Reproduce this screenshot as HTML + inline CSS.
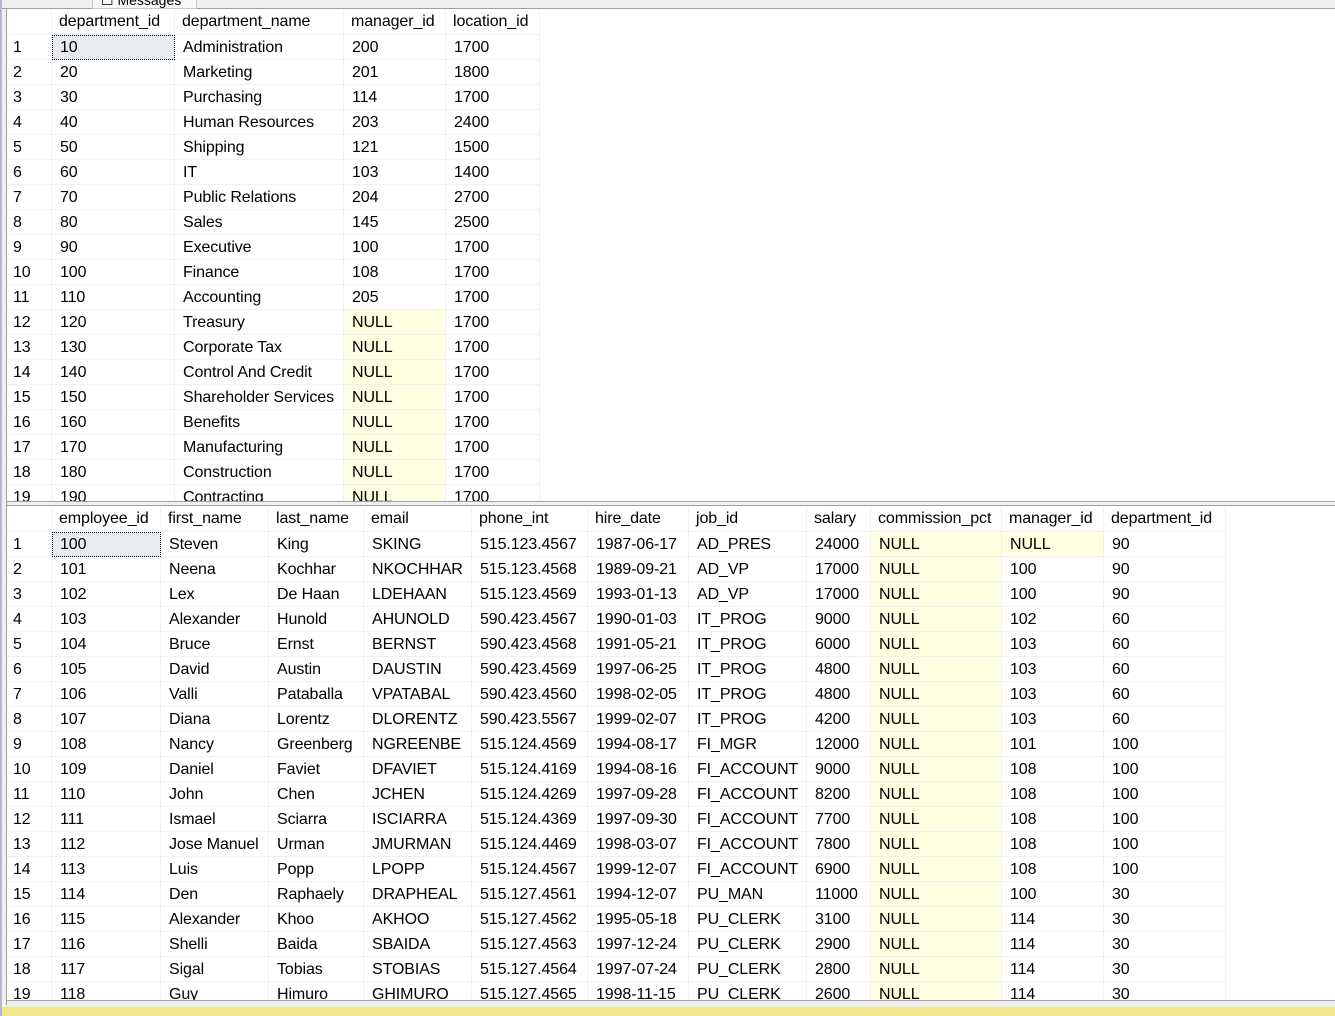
<!DOCTYPE html>
<html><head><meta charset="utf-8"><style>
*{margin:0;padding:0;box-sizing:border-box}
body{width:1335px;height:1016px;overflow:hidden;background:#fff;font-family:"Liberation Sans",Arial,sans-serif;font-size:16px;color:#000;position:relative}
.top{position:absolute;left:0;top:0;width:1335px;height:9px;background:#f0f0f0;border-bottom:1px solid #a0a0a0}
.tab{position:absolute;left:92px;top:-6px;width:105px;height:15px;background:#f7f7f7;border:1px solid #c8c8c8;font-size:14px;padding-left:8px;line-height:10px}
.lstrip{position:absolute;left:0;top:0;width:2px;height:1016px;background:#b4b9d0}
.lstrip2{position:absolute;left:2px;top:9px;width:5px;height:996px;background:#f0f0f0;border-right:1px solid #a0a0a0}
.grid{position:absolute;left:7px;overflow:hidden}
.r{display:flex;height:25px;white-space:nowrap}
.c{height:25px;border-right:1px solid #f0f0f0;border-bottom:1px solid #f0f0f0;padding-left:8px;line-height:26px;overflow:hidden;flex:none;letter-spacing:-0.1px}
.h .c{padding-left:7px;line-height:24px;border-bottom:1px solid #f0f0f0}
.n{width:45px;padding-left:6px;border-right:1px solid #f0f0f0}
.y{background:#ffffe1}
.s{background:#e8ecf0;outline:1px dotted #000;outline-offset:-1px}
.sep{position:absolute;left:7px;top:501px;width:1328px;height:5px;background:#f0f0f0;border-top:1px solid #a0a0a0;border-bottom:1px solid #a0a0a0}
.bot{position:absolute;left:0;top:1000px;width:1335px;height:7px;background:#f0f0f0;border-top:1px solid #a0a0a0}
.yel{position:absolute;left:0;top:1007px;width:1335px;height:9px;background:#f0e68c}
</style></head><body>
<div class="top"><div class="tab">☐ Messages</div></div>
<div class="grid" style="top:10px;height:491px;width:1328px">
<div class="r h"><div class="c n"></div><div class="c" style="width:123px">department_id</div><div class="c" style="width:169px">department_name</div><div class="c" style="width:102px">manager_id</div><div class="c" style="width:94px">location_id</div></div>
<div class="r"><div class="c n">1</div><div class="c s" style="width:123px">10</div><div class="c" style="width:169px">Administration</div><div class="c" style="width:102px">200</div><div class="c" style="width:94px">1700</div></div>
<div class="r"><div class="c n">2</div><div class="c" style="width:123px">20</div><div class="c" style="width:169px">Marketing</div><div class="c" style="width:102px">201</div><div class="c" style="width:94px">1800</div></div>
<div class="r"><div class="c n">3</div><div class="c" style="width:123px">30</div><div class="c" style="width:169px">Purchasing</div><div class="c" style="width:102px">114</div><div class="c" style="width:94px">1700</div></div>
<div class="r"><div class="c n">4</div><div class="c" style="width:123px">40</div><div class="c" style="width:169px">Human Resources</div><div class="c" style="width:102px">203</div><div class="c" style="width:94px">2400</div></div>
<div class="r"><div class="c n">5</div><div class="c" style="width:123px">50</div><div class="c" style="width:169px">Shipping</div><div class="c" style="width:102px">121</div><div class="c" style="width:94px">1500</div></div>
<div class="r"><div class="c n">6</div><div class="c" style="width:123px">60</div><div class="c" style="width:169px">IT</div><div class="c" style="width:102px">103</div><div class="c" style="width:94px">1400</div></div>
<div class="r"><div class="c n">7</div><div class="c" style="width:123px">70</div><div class="c" style="width:169px">Public Relations</div><div class="c" style="width:102px">204</div><div class="c" style="width:94px">2700</div></div>
<div class="r"><div class="c n">8</div><div class="c" style="width:123px">80</div><div class="c" style="width:169px">Sales</div><div class="c" style="width:102px">145</div><div class="c" style="width:94px">2500</div></div>
<div class="r"><div class="c n">9</div><div class="c" style="width:123px">90</div><div class="c" style="width:169px">Executive</div><div class="c" style="width:102px">100</div><div class="c" style="width:94px">1700</div></div>
<div class="r"><div class="c n">10</div><div class="c" style="width:123px">100</div><div class="c" style="width:169px">Finance</div><div class="c" style="width:102px">108</div><div class="c" style="width:94px">1700</div></div>
<div class="r"><div class="c n">11</div><div class="c" style="width:123px">110</div><div class="c" style="width:169px">Accounting</div><div class="c" style="width:102px">205</div><div class="c" style="width:94px">1700</div></div>
<div class="r"><div class="c n">12</div><div class="c" style="width:123px">120</div><div class="c" style="width:169px">Treasury</div><div class="c y" style="width:102px">NULL</div><div class="c" style="width:94px">1700</div></div>
<div class="r"><div class="c n">13</div><div class="c" style="width:123px">130</div><div class="c" style="width:169px">Corporate Tax</div><div class="c y" style="width:102px">NULL</div><div class="c" style="width:94px">1700</div></div>
<div class="r"><div class="c n">14</div><div class="c" style="width:123px">140</div><div class="c" style="width:169px">Control And Credit</div><div class="c y" style="width:102px">NULL</div><div class="c" style="width:94px">1700</div></div>
<div class="r"><div class="c n">15</div><div class="c" style="width:123px">150</div><div class="c" style="width:169px">Shareholder Services</div><div class="c y" style="width:102px">NULL</div><div class="c" style="width:94px">1700</div></div>
<div class="r"><div class="c n">16</div><div class="c" style="width:123px">160</div><div class="c" style="width:169px">Benefits</div><div class="c y" style="width:102px">NULL</div><div class="c" style="width:94px">1700</div></div>
<div class="r"><div class="c n">17</div><div class="c" style="width:123px">170</div><div class="c" style="width:169px">Manufacturing</div><div class="c y" style="width:102px">NULL</div><div class="c" style="width:94px">1700</div></div>
<div class="r"><div class="c n">18</div><div class="c" style="width:123px">180</div><div class="c" style="width:169px">Construction</div><div class="c y" style="width:102px">NULL</div><div class="c" style="width:94px">1700</div></div>
<div class="r"><div class="c n">19</div><div class="c" style="width:123px">190</div><div class="c" style="width:169px">Contracting</div><div class="c y" style="width:102px">NULL</div><div class="c" style="width:94px">1700</div></div>
</div>
<div class="sep"></div>
<div class="grid" style="top:507px;height:493px;width:1328px">
<div class="r h"><div class="c n"></div><div class="c" style="width:109px">employee_id</div><div class="c" style="width:108px">first_name</div><div class="c" style="width:95px">last_name</div><div class="c" style="width:108px">email</div><div class="c" style="width:116px">phone_int</div><div class="c" style="width:101px">hire_date</div><div class="c" style="width:118px">job_id</div><div class="c" style="width:64px">salary</div><div class="c" style="width:131px">commission_pct</div><div class="c" style="width:102px">manager_id</div><div class="c" style="width:122px">department_id</div></div>
<div class="r"><div class="c n">1</div><div class="c s" style="width:109px">100</div><div class="c" style="width:108px">Steven</div><div class="c" style="width:95px">King</div><div class="c" style="width:108px">SKING</div><div class="c" style="width:116px">515.123.4567</div><div class="c" style="width:101px">1987-06-17</div><div class="c" style="width:118px">AD_PRES</div><div class="c" style="width:64px">24000</div><div class="c y" style="width:131px">NULL</div><div class="c y" style="width:102px">NULL</div><div class="c" style="width:122px">90</div></div>
<div class="r"><div class="c n">2</div><div class="c" style="width:109px">101</div><div class="c" style="width:108px">Neena</div><div class="c" style="width:95px">Kochhar</div><div class="c" style="width:108px">NKOCHHAR</div><div class="c" style="width:116px">515.123.4568</div><div class="c" style="width:101px">1989-09-21</div><div class="c" style="width:118px">AD_VP</div><div class="c" style="width:64px">17000</div><div class="c y" style="width:131px">NULL</div><div class="c" style="width:102px">100</div><div class="c" style="width:122px">90</div></div>
<div class="r"><div class="c n">3</div><div class="c" style="width:109px">102</div><div class="c" style="width:108px">Lex</div><div class="c" style="width:95px">De Haan</div><div class="c" style="width:108px">LDEHAAN</div><div class="c" style="width:116px">515.123.4569</div><div class="c" style="width:101px">1993-01-13</div><div class="c" style="width:118px">AD_VP</div><div class="c" style="width:64px">17000</div><div class="c y" style="width:131px">NULL</div><div class="c" style="width:102px">100</div><div class="c" style="width:122px">90</div></div>
<div class="r"><div class="c n">4</div><div class="c" style="width:109px">103</div><div class="c" style="width:108px">Alexander</div><div class="c" style="width:95px">Hunold</div><div class="c" style="width:108px">AHUNOLD</div><div class="c" style="width:116px">590.423.4567</div><div class="c" style="width:101px">1990-01-03</div><div class="c" style="width:118px">IT_PROG</div><div class="c" style="width:64px">9000</div><div class="c y" style="width:131px">NULL</div><div class="c" style="width:102px">102</div><div class="c" style="width:122px">60</div></div>
<div class="r"><div class="c n">5</div><div class="c" style="width:109px">104</div><div class="c" style="width:108px">Bruce</div><div class="c" style="width:95px">Ernst</div><div class="c" style="width:108px">BERNST</div><div class="c" style="width:116px">590.423.4568</div><div class="c" style="width:101px">1991-05-21</div><div class="c" style="width:118px">IT_PROG</div><div class="c" style="width:64px">6000</div><div class="c y" style="width:131px">NULL</div><div class="c" style="width:102px">103</div><div class="c" style="width:122px">60</div></div>
<div class="r"><div class="c n">6</div><div class="c" style="width:109px">105</div><div class="c" style="width:108px">David</div><div class="c" style="width:95px">Austin</div><div class="c" style="width:108px">DAUSTIN</div><div class="c" style="width:116px">590.423.4569</div><div class="c" style="width:101px">1997-06-25</div><div class="c" style="width:118px">IT_PROG</div><div class="c" style="width:64px">4800</div><div class="c y" style="width:131px">NULL</div><div class="c" style="width:102px">103</div><div class="c" style="width:122px">60</div></div>
<div class="r"><div class="c n">7</div><div class="c" style="width:109px">106</div><div class="c" style="width:108px">Valli</div><div class="c" style="width:95px">Pataballa</div><div class="c" style="width:108px">VPATABAL</div><div class="c" style="width:116px">590.423.4560</div><div class="c" style="width:101px">1998-02-05</div><div class="c" style="width:118px">IT_PROG</div><div class="c" style="width:64px">4800</div><div class="c y" style="width:131px">NULL</div><div class="c" style="width:102px">103</div><div class="c" style="width:122px">60</div></div>
<div class="r"><div class="c n">8</div><div class="c" style="width:109px">107</div><div class="c" style="width:108px">Diana</div><div class="c" style="width:95px">Lorentz</div><div class="c" style="width:108px">DLORENTZ</div><div class="c" style="width:116px">590.423.5567</div><div class="c" style="width:101px">1999-02-07</div><div class="c" style="width:118px">IT_PROG</div><div class="c" style="width:64px">4200</div><div class="c y" style="width:131px">NULL</div><div class="c" style="width:102px">103</div><div class="c" style="width:122px">60</div></div>
<div class="r"><div class="c n">9</div><div class="c" style="width:109px">108</div><div class="c" style="width:108px">Nancy</div><div class="c" style="width:95px">Greenberg</div><div class="c" style="width:108px">NGREENBE</div><div class="c" style="width:116px">515.124.4569</div><div class="c" style="width:101px">1994-08-17</div><div class="c" style="width:118px">FI_MGR</div><div class="c" style="width:64px">12000</div><div class="c y" style="width:131px">NULL</div><div class="c" style="width:102px">101</div><div class="c" style="width:122px">100</div></div>
<div class="r"><div class="c n">10</div><div class="c" style="width:109px">109</div><div class="c" style="width:108px">Daniel</div><div class="c" style="width:95px">Faviet</div><div class="c" style="width:108px">DFAVIET</div><div class="c" style="width:116px">515.124.4169</div><div class="c" style="width:101px">1994-08-16</div><div class="c" style="width:118px">FI_ACCOUNT</div><div class="c" style="width:64px">9000</div><div class="c y" style="width:131px">NULL</div><div class="c" style="width:102px">108</div><div class="c" style="width:122px">100</div></div>
<div class="r"><div class="c n">11</div><div class="c" style="width:109px">110</div><div class="c" style="width:108px">John</div><div class="c" style="width:95px">Chen</div><div class="c" style="width:108px">JCHEN</div><div class="c" style="width:116px">515.124.4269</div><div class="c" style="width:101px">1997-09-28</div><div class="c" style="width:118px">FI_ACCOUNT</div><div class="c" style="width:64px">8200</div><div class="c y" style="width:131px">NULL</div><div class="c" style="width:102px">108</div><div class="c" style="width:122px">100</div></div>
<div class="r"><div class="c n">12</div><div class="c" style="width:109px">111</div><div class="c" style="width:108px">Ismael</div><div class="c" style="width:95px">Sciarra</div><div class="c" style="width:108px">ISCIARRA</div><div class="c" style="width:116px">515.124.4369</div><div class="c" style="width:101px">1997-09-30</div><div class="c" style="width:118px">FI_ACCOUNT</div><div class="c" style="width:64px">7700</div><div class="c y" style="width:131px">NULL</div><div class="c" style="width:102px">108</div><div class="c" style="width:122px">100</div></div>
<div class="r"><div class="c n">13</div><div class="c" style="width:109px">112</div><div class="c" style="width:108px">Jose Manuel</div><div class="c" style="width:95px">Urman</div><div class="c" style="width:108px">JMURMAN</div><div class="c" style="width:116px">515.124.4469</div><div class="c" style="width:101px">1998-03-07</div><div class="c" style="width:118px">FI_ACCOUNT</div><div class="c" style="width:64px">7800</div><div class="c y" style="width:131px">NULL</div><div class="c" style="width:102px">108</div><div class="c" style="width:122px">100</div></div>
<div class="r"><div class="c n">14</div><div class="c" style="width:109px">113</div><div class="c" style="width:108px">Luis</div><div class="c" style="width:95px">Popp</div><div class="c" style="width:108px">LPOPP</div><div class="c" style="width:116px">515.124.4567</div><div class="c" style="width:101px">1999-12-07</div><div class="c" style="width:118px">FI_ACCOUNT</div><div class="c" style="width:64px">6900</div><div class="c y" style="width:131px">NULL</div><div class="c" style="width:102px">108</div><div class="c" style="width:122px">100</div></div>
<div class="r"><div class="c n">15</div><div class="c" style="width:109px">114</div><div class="c" style="width:108px">Den</div><div class="c" style="width:95px">Raphaely</div><div class="c" style="width:108px">DRAPHEAL</div><div class="c" style="width:116px">515.127.4561</div><div class="c" style="width:101px">1994-12-07</div><div class="c" style="width:118px">PU_MAN</div><div class="c" style="width:64px">11000</div><div class="c y" style="width:131px">NULL</div><div class="c" style="width:102px">100</div><div class="c" style="width:122px">30</div></div>
<div class="r"><div class="c n">16</div><div class="c" style="width:109px">115</div><div class="c" style="width:108px">Alexander</div><div class="c" style="width:95px">Khoo</div><div class="c" style="width:108px">AKHOO</div><div class="c" style="width:116px">515.127.4562</div><div class="c" style="width:101px">1995-05-18</div><div class="c" style="width:118px">PU_CLERK</div><div class="c" style="width:64px">3100</div><div class="c y" style="width:131px">NULL</div><div class="c" style="width:102px">114</div><div class="c" style="width:122px">30</div></div>
<div class="r"><div class="c n">17</div><div class="c" style="width:109px">116</div><div class="c" style="width:108px">Shelli</div><div class="c" style="width:95px">Baida</div><div class="c" style="width:108px">SBAIDA</div><div class="c" style="width:116px">515.127.4563</div><div class="c" style="width:101px">1997-12-24</div><div class="c" style="width:118px">PU_CLERK</div><div class="c" style="width:64px">2900</div><div class="c y" style="width:131px">NULL</div><div class="c" style="width:102px">114</div><div class="c" style="width:122px">30</div></div>
<div class="r"><div class="c n">18</div><div class="c" style="width:109px">117</div><div class="c" style="width:108px">Sigal</div><div class="c" style="width:95px">Tobias</div><div class="c" style="width:108px">STOBIAS</div><div class="c" style="width:116px">515.127.4564</div><div class="c" style="width:101px">1997-07-24</div><div class="c" style="width:118px">PU_CLERK</div><div class="c" style="width:64px">2800</div><div class="c y" style="width:131px">NULL</div><div class="c" style="width:102px">114</div><div class="c" style="width:122px">30</div></div>
<div class="r"><div class="c n">19</div><div class="c" style="width:109px">118</div><div class="c" style="width:108px">Guy</div><div class="c" style="width:95px">Himuro</div><div class="c" style="width:108px">GHIMURO</div><div class="c" style="width:116px">515.127.4565</div><div class="c" style="width:101px">1998-11-15</div><div class="c" style="width:118px">PU_CLERK</div><div class="c" style="width:64px">2600</div><div class="c y" style="width:131px">NULL</div><div class="c" style="width:102px">114</div><div class="c" style="width:122px">30</div></div>
</div>
<div class="bot"></div>
<div class="yel"></div>
<div class="lstrip2"></div>
<div class="lstrip"></div>
</body></html>
